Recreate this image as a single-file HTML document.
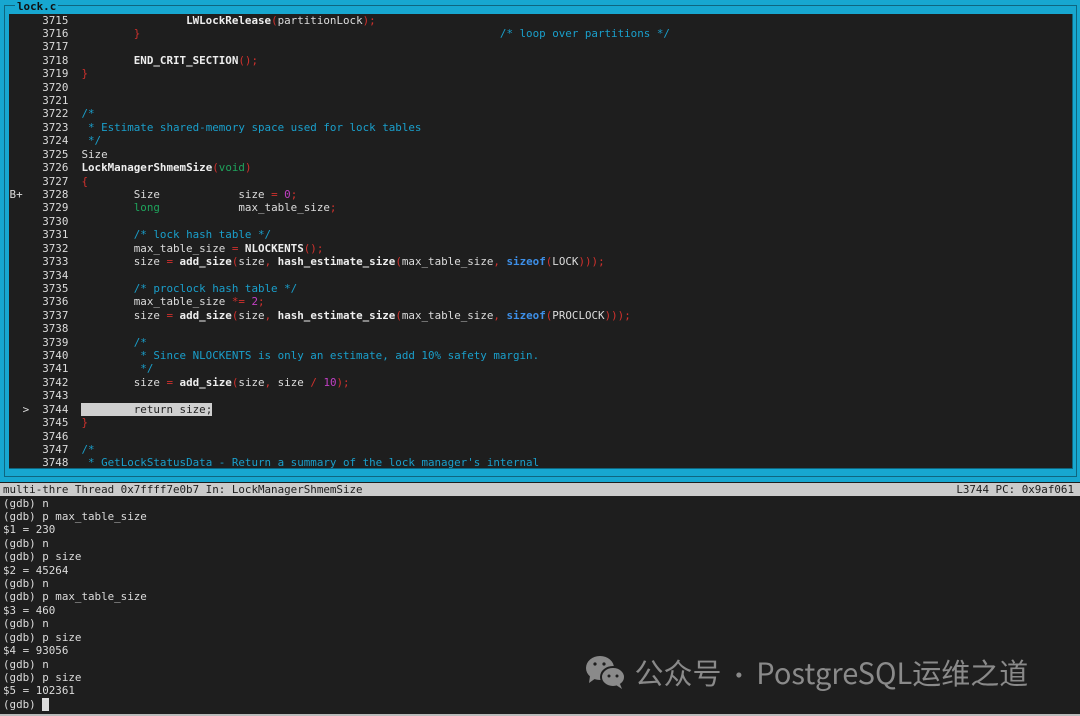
<!DOCTYPE html>
<html><head><meta charset="utf-8"><style>
html,body{margin:0;padding:0;background:#1e1e1e;width:1080px;height:716px;overflow:hidden;position:relative}
.mono{font-family:"DejaVu Sans Mono","Liberation Mono",monospace;font-size:10.86px;line-height:13.42px;white-space:pre;color:#dcdcdc}
#frame{position:absolute;left:0;top:0;width:1080px;height:482px;background:#17a7d0}
#topline{position:absolute;left:4px;top:5px;width:1072px;height:1px;background:#0e6680}
#rline{position:absolute;left:1076px;top:5px;width:1px;height:472px;background:#0e6680}
#lline{position:absolute;left:4px;top:5px;width:1px;height:472px;background:#0e6680}
#bline{position:absolute;left:4px;top:476px;width:1073px;height:1px;background:#0e6680}
#inner{position:absolute;left:9px;top:14px;width:1063px;height:454px;background:#1e1e1e;border-right:1px solid #0e6680;border-bottom:1px solid #0e6680}
#title{position:absolute;left:15px;top:0px;background:#17a7d0;color:#111;padding:0 2px}
#code{position:absolute;left:3px;top:13.5px}
#status{position:absolute;left:0;top:483px;width:1080px;height:13px;background:#cbcbcb;color:#1e1e1e;line-height:14px}
#status .l{position:absolute;left:3px;top:0}
#status .rt{position:absolute;right:6px;top:0}
#gdb{position:absolute;left:3px;top:496.5px}
.r{color:#d0312d}.c{color:#1a9fcb}.b{font-weight:bold;color:#eee}.m{color:#c13fc4}.g{color:#1fa35c}.k{color:#3d8fe8;font-weight:bold}
.hl{background:#cfcfcf;color:#222}
#wm{position:absolute;left:584px;top:651px;font-family:"Noto Sans CJK SC","Liberation Sans",sans-serif;font-size:29px;color:#8a8a8a;line-height:42px;white-space:nowrap}
#bot{position:absolute;left:0;top:714px;width:1080px;height:2px;background:#bbb}
</style></head><body>
<div id="frame"><div id="topline"></div><div id="lline"></div><div id="rline"></div><div id="bline"></div><div id="inner"></div>
<div id="title" class="mono"><b>lock.c</b></div></div>
<div id="code" class="mono">      3715                  <span class="b">LWLockRelease</span><span class="r">(</span>partitionLock<span class="r">);</span>
      3716          <span class="r">}</span>                                                       <span class="c">/* loop over partitions */</span>
      3717
      3718          <span class="b">END_CRIT_SECTION</span><span class="r">();</span>
      3719  <span class="r">}</span>
      3720
      3721
      3722  <span class="c">/*</span>
      3723  <span class="c"> * Estimate shared-memory space used for lock tables</span>
      3724  <span class="c"> */</span>
      3725  Size
      3726  <span class="b">LockManagerShmemSize</span><span class="r">(</span><span class="g">void</span><span class="r">)</span>
      3727  <span class="r">{</span>
 B+   3728          Size            size <span class="r">=</span> <span class="m">0</span><span class="r">;</span>
      3729          <span class="g">long</span>            max_table_size<span class="r">;</span>
      3730
      3731          <span class="c">/* lock hash table */</span>
      3732          max_table_size <span class="r">=</span> <span class="b">NLOCKENTS</span><span class="r">();</span>
      3733          size <span class="r">=</span> <span class="b">add_size</span><span class="r">(</span>size<span class="r">,</span> <span class="b">hash_estimate_size</span><span class="r">(</span>max_table_size<span class="r">,</span> <span class="k">sizeof</span><span class="r">(</span>LOCK<span class="r">)));</span>
      3734
      3735          <span class="c">/* proclock hash table */</span>
      3736          max_table_size <span class="r">*=</span> <span class="m">2</span><span class="r">;</span>
      3737          size <span class="r">=</span> <span class="b">add_size</span><span class="r">(</span>size<span class="r">,</span> <span class="b">hash_estimate_size</span><span class="r">(</span>max_table_size<span class="r">,</span> <span class="k">sizeof</span><span class="r">(</span>PROCLOCK<span class="r">)));</span>
      3738
      3739          <span class="c">/*</span>
      3740          <span class="c"> * Since NLOCKENTS is only an estimate, add 10% safety margin.</span>
      3741          <span class="c"> */</span>
      3742          size <span class="r">=</span> <span class="b">add_size</span><span class="r">(</span>size<span class="r">,</span> size <span class="r">/</span> <span class="m">10</span><span class="r">);</span>
      3743
   &gt;  3744  <span class="hl">        return size;</span>
      3745  <span class="r">}</span>
      3746
      3747  <span class="c">/*</span>
      3748  <span class="c"> * GetLockStatusData - Return a summary of the lock manager's internal</span></div>
<div id="status" class="mono"><span class="l">multi-thre Thread 0x7ffff7e0b7 In: LockManagerShmemSize</span><span class="rt">L3744 PC: 0x9af061</span></div>
<div id="gdb" class="mono">(gdb) n
(gdb) p max_table_size
$1 = 230
(gdb) n
(gdb) p size
$2 = 45264
(gdb) n
(gdb) p max_table_size
$3 = 460
(gdb) n
(gdb) p size
$4 = 93056
(gdb) n
(gdb) p size
$5 = 102361
(gdb) <span style="background:#ddd"> </span></div>
<div id="wm"><svg width="44" height="36" viewBox="0 0 44 36" style="vertical-align:-6px"><ellipse cx="16" cy="14" rx="14" ry="12" fill="#8a8a8a"/><path d="M6 22 L5 29 L12 24Z" fill="#8a8a8a"/><ellipse cx="29" cy="23" rx="12" ry="10" fill="#8a8a8a" stroke="#1e1e1e" stroke-width="2"/><path d="M36 30 L38 35 L32 31Z" fill="#8a8a8a"/><circle cx="11" cy="10" r="1.6" fill="#1e1e1e"/><circle cx="20" cy="10" r="1.6" fill="#1e1e1e"/><circle cx="25" cy="22" r="1.5" fill="#1e1e1e"/><circle cx="33" cy="22" r="1.5" fill="#1e1e1e"/></svg> 公众号<span style="font-size:24px"> · </span>PostgreSQL运维之道</div>
<div id="bot"></div>
</body></html>
